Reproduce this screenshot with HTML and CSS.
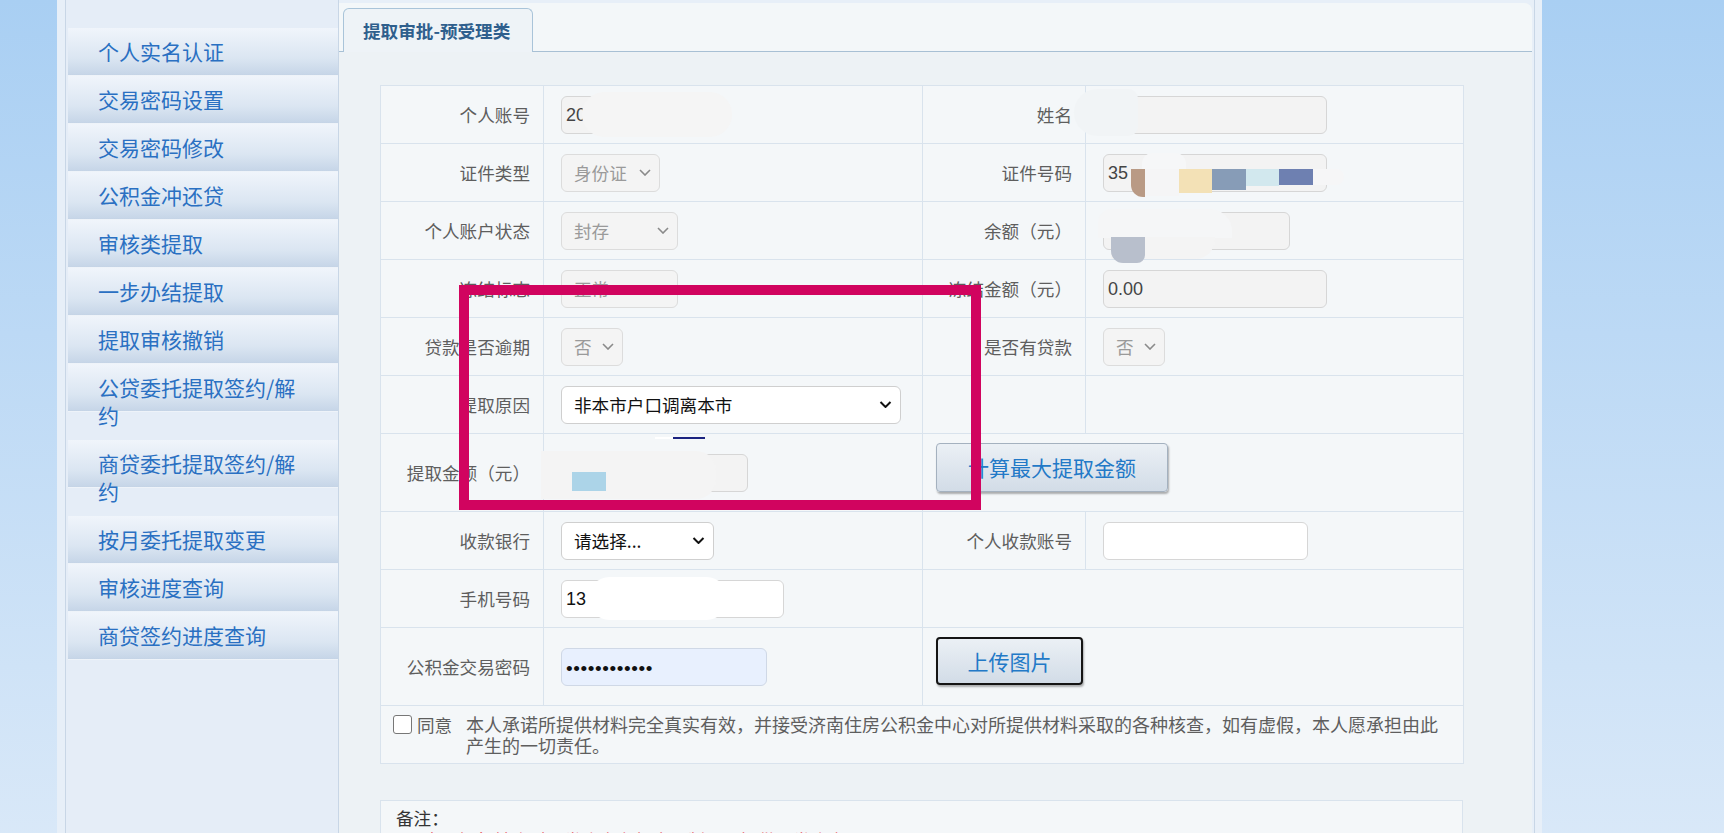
FILE: index.html
```html
<!DOCTYPE html>
<html lang="zh-CN">
<head>
<meta charset="utf-8">
<title>提取审批-预受理类</title>
<link rel="stylesheet" href="styles.css">
</head>
<body>
<div class="page">
  <aside class="sidebar">
    <ul class="menu">
      <li>个人实名认证</li>
      <li>交易密码设置</li>
      <li>交易密码修改</li>
      <li>公积金冲还贷</li>
      <li>审核类提取</li>
      <li>一步办结提取</li>
      <li>提取审核撤销</li>
      <li>公贷委托提取签约/解约</li>
      <li>商贷委托提取签约/解约</li>
      <li>按月委托提取变更</li>
      <li>审核进度查询</li>
      <li>商贷签约进度查询</li>
    </ul>
  </aside>
  <div class="main-wrap">
    <main class="main">
      <div class="tabbar"><div class="tab">提取审批-预受理类</div></div>
      <div class="content">
        <table class="form">
          <colgroup><col class="c1"><col class="c2"><col class="c3"><col class="c4"></colgroup>
          <tr class="r">
            <td class="lbl">个人账号</td>
            <td class="val"><span class="field num w152">20</span></td>
            <td class="lbl">姓名</td>
            <td class="val"><span class="field w224"></span></td>
          </tr>
          <tr class="r">
            <td class="lbl">证件类型</td>
            <td class="val"><span class="sel w99">身份证<svg viewBox="0 0 12 7"><polyline points="1,1 6,6 11,1"/></svg></span></td>
            <td class="lbl">证件号码</td>
            <td class="val"><span class="field num w224">35</span></td>
          </tr>
          <tr class="r">
            <td class="lbl">个人账户状态</td>
            <td class="val"><span class="sel w117">封存<svg viewBox="0 0 12 7"><polyline points="1,1 6,6 11,1"/></svg></span></td>
            <td class="lbl">余额（元）</td>
            <td class="val"><span class="field w187"></span></td>
          </tr>
          <tr class="r">
            <td class="lbl">冻结标志</td>
            <td class="val"><span class="sel w117">正常<svg viewBox="0 0 12 7"><polyline points="1,1 6,6 11,1"/></svg></span></td>
            <td class="lbl">冻结金额（元）</td>
            <td class="val"><span class="field num w224">0.00</span></td>
          </tr>
          <tr class="r">
            <td class="lbl">贷款是否逾期</td>
            <td class="val"><span class="sel w62">否<svg viewBox="0 0 12 7"><polyline points="1,1 6,6 11,1"/></svg></span></td>
            <td class="lbl">是否有贷款</td>
            <td class="val"><span class="sel w62">否<svg viewBox="0 0 12 7"><polyline points="1,1 6,6 11,1"/></svg></span></td>
          </tr>
          <tr class="r">
            <td class="lbl">提取原因</td>
            <td class="val"><span class="sel on w340">非本市户口调离本市<svg viewBox="0 0 12 7"><polyline points="1,1 6,6 11,1"/></svg></span></td>
            <td></td>
            <td></td>
          </tr>
          <tr class="r tall">
            <td class="lbl">提取金额（元）</td>
            <td class="val"><span class="field w187"></span></td>
            <td class="bcell" colspan="2"><button class="btn calc" type="button">计算最大提取金额</button></td>
          </tr>
          <tr class="r">
            <td class="lbl">收款银行</td>
            <td class="val"><span class="sel on w153">请选择...<svg viewBox="0 0 12 7"><polyline points="1,1 6,6 11,1"/></svg></span></td>
            <td class="lbl">个人收款账号</td>
            <td class="val"><span class="field white w205"></span></td>
          </tr>
          <tr class="r">
            <td class="lbl">手机号码</td>
            <td class="val"><span class="field white num w223">13</span></td>
            <td colspan="2"></td>
          </tr>
          <tr class="r tall">
            <td class="lbl">公积金交易密码</td>
            <td class="val"><span class="field auto w206"><span class="dots">••••••••••••</span></span></td>
            <td class="bcell" colspan="2"><button class="btn upload" type="button">上传图片</button></td>
          </tr>
          <tr class="r">
            <td class="agree" colspan="4">
              <div class="agree-in">
                <label class="chk"><span class="box"></span>同意</label>
                <p class="promise">本人承诺所提供材料完全真实有效，并接受济南住房公积金中心对所提供材料采取的各种核查，如有虚假，本人愿承担由此产生的一切责任。</p>
              </div>
            </td>
          </tr>
        </table>
        <div class="notes">
          <div class="notes-title">备注：</div>
          <div class="notes-red">1、由于银行转账对二类账户有额度限制，需提供一类账户。</div>
        </div>
      </div>
    </main>
  </div>
</div>

<div class="redact">
  <span class="blob b1"></span>
  <span class="blob b2"></span>
  <span class="blob b3w"></span>
  <span class="blk k1"></span>
  <span class="blk k2"></span>
  <span class="blk k3"></span>
  <span class="blk k4"></span>
  <span class="blk k5"></span>
  <span class="blk k6"></span>
  <span class="blk k7"></span>
  <span class="blob b4"></span>
  <span class="blob b5"></span>
  <span class="blk k8"></span>
  <span class="blob b6"></span>
  <span class="blk k9"></span>
  <span class="blk k10"></span>
  <span class="blk k11"></span>
  <span class="blob b7"></span>
</div>
<div class="annot"></div>
</body>
</html>
```

FILE: styles.css
```css
* { box-sizing: border-box; }
html, body { margin: 0; padding: 0; }
body {
  min-height: 100vh;
  overflow: hidden;
  background: linear-gradient(#a9cff3, #e2edf9);
  font-family: "Noto Sans CJK SC", sans-serif;
  position: relative;
}
.page {
  margin-left: 57px;
  width: 1485px;
  min-height: 100vh;
  background: #e7eff8;
  display: flex;
  padding-left: 8px;
  padding-right: 7px;
}
.sidebar {
  width: 274px;
  flex: none;
  border-left: 1px solid #c8d6e6;
  border-right: 1px solid #c8d6e6;
  padding-left: 2px;
  padding-top: 28px;
  background: #e5edf7;
}
.menu { list-style: none; margin: 0; padding: 0; }
.menu li {
  padding: 9px 35px 11px 30px;
  line-height: 28px;
  font-size: 21px;
  color: #2a70c2;
  background: linear-gradient(#f0f5fb 0, #dbe6f2 30px, #c7d6e8 46px, #c4d3e5 47px, #eef3f9 47px) no-repeat;
  background-size: 100% 48px;
}
.main-wrap {
  flex: 1;
  padding-right: 2px;
  border-right: 1px solid #c8d6e6;
}
.main {
  margin-top: 3px;
  background: #edf2f5;
  border-top-right-radius: 8px;
  min-height: 830px;
}
.tabbar {
  height: 49px;
  display: flex;
  align-items: flex-end;
  padding-left: 4px;
  background: #f3f7f9;
  border-top-right-radius: 8px;
  border-bottom: 1px solid #a8c0d4;
}
.tab {
  width: 190px;
  height: 44px;
  margin-bottom: -1px;
  padding-left: 19px;
  line-height: 44px;
  font-size: 17.6px;
  font-weight: bold;
  color: #2f5f8d;
  background: #eef3f7;
  border: 1px solid #a9c4d9;
  border-bottom: none;
  border-radius: 6px 6px 0 0;
}
.content { padding: 33px 0 0 41px; }
.form {
  width: 1083px;
  table-layout: fixed;
  border-collapse: collapse;
  background: #f4f7f9;
}
.c1 { width: 163px; }
.c2 { width: 379px; }
.c3 { width: 163px; }
.c4 { width: 378px; }
.form td {
  border: 1px solid #d9e3ed;
  padding: 0;
  vertical-align: middle;
  font-size: 17.6px;
}
.r { height: 58px; }
.r.tall { height: 78px; }
.lbl { text-align: right; padding-right: 13px !important; color: #5e5e5e; white-space: nowrap; }
.val { padding-left: 17px !important; }
.bcell { padding-left: 13px !important; }

.field {
  display: block;
  height: 38px;
  line-height: 36px;
  border: 1px solid #d6d6d6;
  border-radius: 6px;
  background: #f3f3f3;
  padding: 0 4px;
  font-size: 18px;
  color: #444;
}
.field.num { font-family: "Liberation Sans", "Noto Sans CJK SC", sans-serif; }
.field.white { background: #fff; color: #111; }
.field.auto { background: #e8f0fe; border-color: #cfd8e6; color: #111; }
.dots { font-family: "Liberation Sans", sans-serif; font-size: 19px; letter-spacing: 0.6px; }

.sel {
  display: flex;
  align-items: center;
  justify-content: space-between;
  height: 38px;
  padding: 0 8px 0 12px;
  border: 1px solid #dcdcdc;
  border-radius: 6px;
  background: #f4f4f4;
  color: #9a9a9a;
  font-size: 17.6px;
}
.sel svg { width: 12px; height: 7px; flex: none; }
.sel polyline { fill: none; stroke: #8a8a8a; stroke-width: 1.6; }
.sel.on { background: #fff; color: #111; border-color: #cfcfcf; }
.sel.on svg { width: 13px; }
.sel.on polyline { stroke: #111; stroke-width: 2; }

.w62 { width: 62px; }
.w99 { width: 99px; }
.w117 { width: 117px; }
.w152 { width: 152px; }
.w153 { width: 153px; }
.w187 { width: 187px; }
.w205 { width: 205px; }
.w206 { width: 206px; }
.w223 { width: 223px; }
.w224 { width: 224px; }
.w340 { width: 340px; }

.btn {
  display: block;
  margin: 0 0 11px;
  padding: 0;
  font-family: "Noto Sans CJK SC", sans-serif;
  font-size: 21px;
  color: #2279c7;
  background: linear-gradient(#ebf0f5, #d2dce7);
  border: 1px solid #a4b1bf;
  border-radius: 4px;
  box-shadow: 1px 2px 2px rgba(0, 0, 0, 0.3);
}
.calc { width: 232px; height: 49px; }
.upload { width: 147px; height: 48px; border: 2px solid #151515; }

.agree { padding: 0 12px !important; }
.agree-in { display: flex; align-items: flex-start; }
.chk {
  display: flex;
  align-items: center;
  height: 21px;
  color: #5e5e5e;
  font-size: 17.6px;
  width: 73px;
  flex: none;
}
.box {
  width: 19px;
  height: 19px;
  margin-right: 5px;
  border: 1px solid #777;
  border-radius: 3px;
  background: #fff;
}
.promise {
  margin: 0;
  width: 980px;
  font-size: 18px;
  line-height: 21px;
  color: #5e5e5e;
}

.notes {
  margin-top: 36px;
  width: 1083px;
  height: 200px;
  background: #f4f7f9;
  border: 1px solid #d9e3ed;
  padding: 6px 15px;
  font-size: 17.6px;
  line-height: 22px;
}
.notes-title { color: #333; }
.notes-red { color: #e8404c; }

/* redaction smudges lying over the fields */
.redact { position: absolute; left: 0; top: 0; width: 0; height: 0; }
.redact span { position: absolute; display: block; }
.blob { border-radius: 22px; }
.b1 { left: 582px; top: 92px; width: 150px; height: 45px; background: #f5f5f5; }
.b2 { left: 1074px; top: 89px; width: 64px; height: 47px; background: #f1f4f6; border-radius: 24px 10px 10px 24px; }
.b3w { left: 1142px; top: 153px; width: 44px; height: 17px; background: #f6f7f8; border-radius: 10px 10px 0 0; }
.blk { border-radius: 0; }
.k1 { left: 1131px; top: 169px; width: 14px; height: 28px; background: #b99a85; border-radius: 0 0 0 12px; }
.k2 { left: 1145px; top: 169px; width: 34px; height: 27px; background: #f5f5f6; }
.k3 { left: 1179px; top: 169px; width: 33px; height: 24px; background: #f3e1b6; }
.k4 { left: 1212px; top: 169px; width: 34px; height: 21px; background: #879cb7; }
.k5 { left: 1246px; top: 169px; width: 33px; height: 17px; background: #d2e8ee; }
.k6 { left: 1279px; top: 169px; width: 34px; height: 16px; background: #6e80b1; }
.k7 { left: 1313px; top: 169px; width: 31px; height: 16px; background: #f6f6f7; border-radius: 0 10px 10px 0; }
.b4 { left: 1098px; top: 209px; width: 134px; height: 29px; background: #f5f6f7; border-radius: 14px 22px 0 0; }
.b5 { left: 1111px; top: 237px; width: 104px; height: 22px; background: #f4f4f4; border-radius: 0 0 20px 0; }
.k8 { left: 1111px; top: 237px; width: 34px; height: 26px; background: #b8bfcc; border-radius: 0 0 8px 12px; }
.b6 { left: 541px; top: 451px; width: 175px; height: 48px; background: #f4f4f4; border-radius: 0 20px 20px 0; }
.k9 { left: 572px; top: 472px; width: 34px; height: 19px; background: #acd4e8; }
.k10 { left: 655px; top: 437px; width: 18px; height: 2px; background: #ffffff; }
.k11 { left: 673px; top: 437px; width: 32px; height: 2px; background: #1b2380; }
.b7 { left: 588px; top: 577px; width: 140px; height: 43px; background: #ffffff; }

.annot {
  position: absolute;
  left: 459px;
  top: 285px;
  width: 522px;
  height: 225px;
  border: 10px solid #d1045f;
}
```
